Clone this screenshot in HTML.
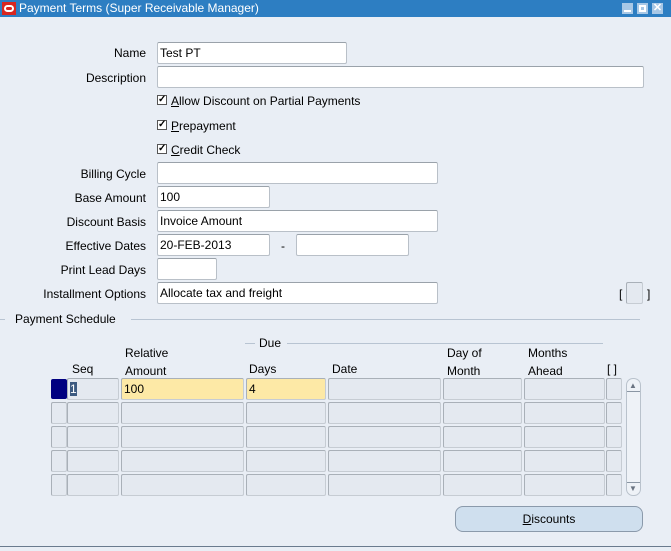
<!DOCTYPE html>
<html><head><meta charset="utf-8"><style>
*{margin:0;padding:0;box-sizing:border-box}
body{width:671px;height:551px;background:#e9eef5;font-family:"Liberation Sans",sans-serif;font-size:12px;color:#000;position:relative;overflow:hidden}
.a{position:absolute;white-space:nowrap}
.t{position:absolute;height:22px;background:#fff;border:1px solid #b9c0c8;border-top-color:#9aa2aa;border-radius:2px;padding:3px 2px;line-height:14px}
.l{position:absolute;text-align:right;width:146px;left:0;line-height:14px}
.cb{position:absolute;width:10px;height:10px;border:1px solid #555;background:#fff;font-size:10px;line-height:8px;text-align:center;font-weight:bold}
.c{position:absolute;height:22px;background:#e4e9f0;border:1px solid #c6ccd3;border-top-color:#a9b0b8;border-left-color:#a9b0b8;border-radius:2px;padding:3px 2px;line-height:14px}
u{text-decoration:underline}
</style></head><body>
<div class="a" style="left:0;top:0;width:671px;height:17px;background:#2d7ec2"></div>
<div class="a" style="left:2px;top:2px;width:14px;height:13px;background:#d8261f"></div>
<div class="a" style="left:4px;top:5px;width:10px;height:7px;border:2px solid #fff;border-radius:4px"></div>
<div class="a" style="left:19px;top:1px;color:#fff;font-size:12px;line-height:15px">Payment Terms (Super Receivable Manager)</div>
<div class="a" style="left:622px;top:3px;width:11px;height:11px;background:#a8c8e6"><div class="a" style="left:2px;top:7px;width:7px;height:2px;background:#fff"></div></div>
<div class="a" style="left:637px;top:3px;width:11px;height:11px;background:#a8c8e6"><div class="a" style="left:2px;top:2px;width:7px;height:7px;border:2px solid #fff"></div></div>
<div class="a" style="left:652px;top:3px;width:11px;height:11px;background:#a8c8e6;color:#fff;font-weight:bold;font-size:11px;line-height:11px;text-align:center">✕</div>

<div class="l" style="top:46px">Name</div><div class="t" style="left:157px;top:42px;width:190px">Test PT</div>
<div class="l" style="top:71px">Description</div><div class="t" style="left:157px;top:66px;width:487px"></div>
<div class="cb" style="left:157px;top:95px">✓</div><div class="a" style="left:171px;top:94px"><u>A</u>llow Discount on Partial Payments</div>
<div class="cb" style="left:157px;top:120px">✓</div><div class="a" style="left:171px;top:119px"><u>P</u>repayment</div>
<div class="cb" style="left:157px;top:144px">✓</div><div class="a" style="left:171px;top:143px"><u>C</u>redit Check</div>
<div class="l" style="top:167px">Billing Cycle</div><div class="t" style="left:157px;top:162px;width:281px"></div>
<div class="l" style="top:191px">Base Amount</div><div class="t" style="left:157px;top:186px;width:113px">100</div>
<div class="l" style="top:215px">Discount Basis</div><div class="t" style="left:157px;top:210px;width:281px">Invoice Amount</div>
<div class="l" style="top:239px">Effective Dates</div><div class="t" style="left:157px;top:234px;width:113px">20-FEB-2013</div>
<div class="a" style="left:281px;top:239px">-</div><div class="t" style="left:296px;top:234px;width:113px"></div>
<div class="l" style="top:263px">Print Lead Days</div><div class="t" style="left:157px;top:258px;width:60px"></div>
<div class="l" style="top:287px">Installment Options</div><div class="t" style="left:157px;top:282px;width:281px">Allocate tax and freight</div>
<div class="a" style="left:619px;top:287px">[</div><div class="c" style="left:626px;top:282px;width:17px"></div><div class="a" style="left:647px;top:287px">]</div>

<div class="a" style="left:0;top:319px;width:5px;border-top:1px solid #b8c4d2"></div>
<div class="a" style="left:15px;top:312px">Payment Schedule</div>
<div class="a" style="left:131px;top:319px;width:509px;border-top:1px solid #b8c4d2"></div>

<div class="a" style="left:245px;top:343px;width:10px;border-top:1px solid #b8c4d2"></div>
<div class="a" style="left:259px;top:336px">Due</div>
<div class="a" style="left:287px;top:343px;width:316px;border-top:1px solid #b8c4d2"></div>
<div class="a" style="left:72px;top:362px">Seq</div>
<div class="a" style="left:125px;top:344px;line-height:18px">Relative<br>Amount</div>
<div class="a" style="left:249px;top:362px">Days</div>
<div class="a" style="left:332px;top:362px">Date</div>
<div class="a" style="left:447px;top:344px;line-height:18px">Day of<br>Month</div>
<div class="a" style="left:528px;top:344px;line-height:18px">Months<br>Ahead</div>
<div class="a" style="left:607px;top:362px">[ ]</div>

<div id="rows"></div>
<div class="a" style="left:51px;top:379px;width:16px;height:20px;background:#000080;border-radius:2px"></div>
<div class="c" style="left:67px;top:378px;width:52px"><span style="background:#3c5a80;color:#fff">1</span></div>
<div class="c" style="left:121px;top:378px;width:123px;background:#fde9a6">100</div>
<div class="c" style="left:246px;top:378px;width:80px;background:#fde9a6">4</div>
<div class="c" style="left:328px;top:378px;width:113px"></div>
<div class="c" style="left:443px;top:378px;width:79px"></div>
<div class="c" style="left:524px;top:378px;width:81px"></div>
<div class="c" style="left:606px;top:378px;width:16px"></div>
<script>
var cols=[[51,16],[67,52],[121,123],[246,80],[328,113],[443,79],[524,81],[606,16]],h='';
for(var r=1;r<5;r++){for(var i=0;i<cols.length;i++){h+='<div class="c" style="left:'+cols[i][0]+'px;top:'+(378+24*r)+'px;width:'+cols[i][1]+'px"></div>';}}
document.getElementById('rows').innerHTML=h;
</script>
<div class="a" style="left:626px;top:378px;width:15px;height:118px;border:1px solid #b9c2cc;border-radius:7px;background:#eef2f7"></div>
<div class="a" style="left:627px;top:391px;width:13px;border-top:1px solid #8a96a4"></div>
<div class="a" style="left:627px;top:482px;width:13px;border-top:1px solid #8a96a4"></div>
<div class="a" style="left:629px;top:381px;font-size:8px;color:#6a7482">▲</div>
<div class="a" style="left:629px;top:484px;font-size:8px;color:#6a7482">▼</div>

<div class="a" style="left:455px;top:506px;width:188px;height:26px;background:#cfdfee;border:1px solid #8b9aab;border-radius:8px;text-align:center;line-height:24px"><u>D</u>iscounts</div>
<div class="a" style="left:0;top:546px;width:671px;border-top:1px solid #6a7b8e"></div>
</body></html>
